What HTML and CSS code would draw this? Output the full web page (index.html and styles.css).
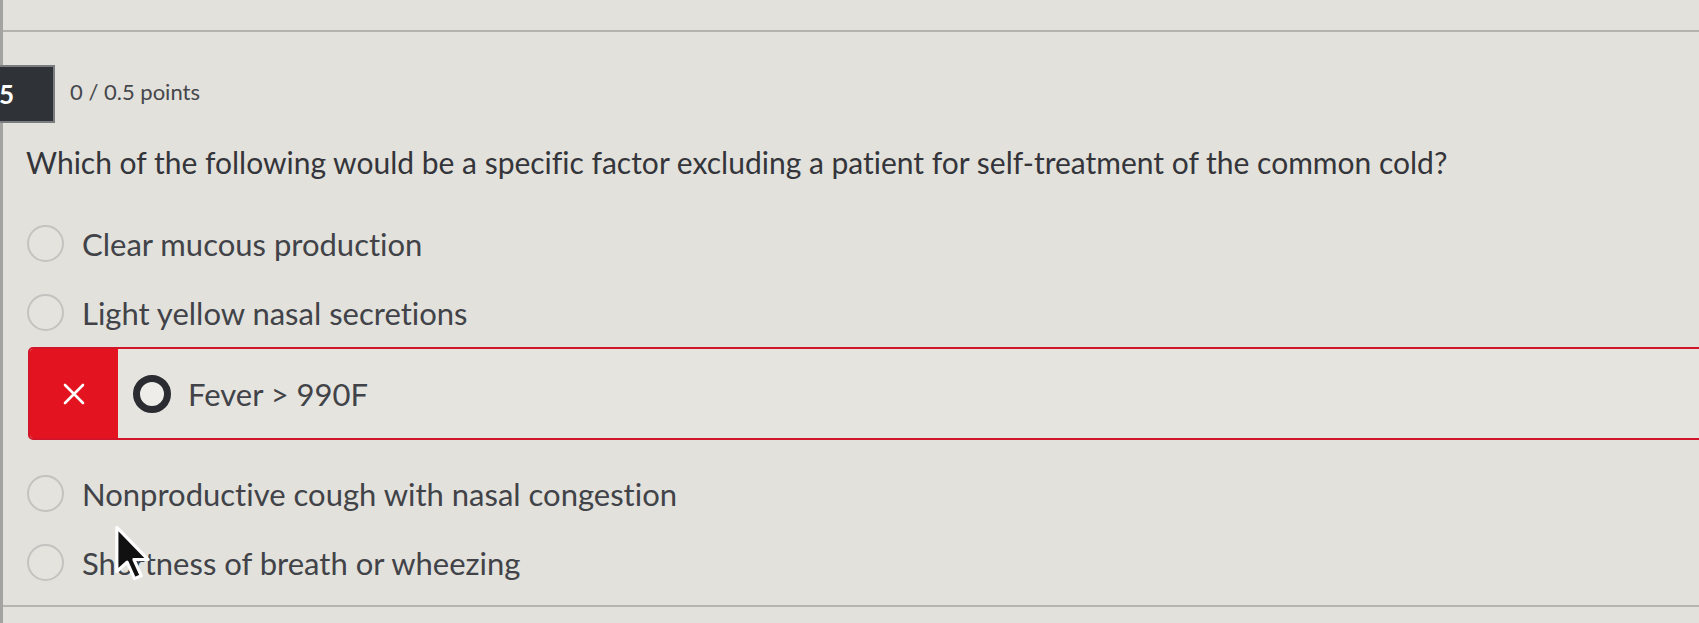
FILE: index.html
```html
<!DOCTYPE html>
<html lang="en">
<head>
<meta charset="utf-8">
<title>Question 5</title>
<link rel="stylesheet" href="styles.css">
</head>
<body>
<div class="page">
  <div class="top-rule"></div>
  <div class="q-header">
    <div class="q-num"><span>5</span></div>
    <div class="q-points">0 / 0.5 points</div>
  </div>
  <p class="q-text">Which of the following would be a specific factor excluding a patient for self-treatment of the common cold?</p>
  <div class="options">
    <div class="opt"><span class="radio"></span><span class="opt-label">Clear mucous production</span></div>
    <div class="opt"><span class="radio"></span><span class="opt-label">Light yellow nasal secretions</span></div>
    <div class="opt-wrong">
      <div class="wrong-flag">
        <svg width="22" height="22" viewBox="0 0 22 22"><path d="M2 2 L20 20 M20 2 L2 20" stroke="#fff" stroke-width="2.6" stroke-linecap="round"/></svg>
      </div>
      <div class="wrong-body"><span class="radio radio-on"></span><span class="opt-label">Fever &gt; 990F</span></div>
    </div>
    <div class="opt opt-after"><span class="radio"></span><span class="opt-label">Nonproductive cough with nasal congestion</span></div>
    <div class="opt"><span class="radio"></span><span class="opt-label">Shortness of breath or wheezing</span></div>
  </div>
  <div class="bottom-rule"></div>
  <svg class="cursor" width="37" height="58" viewBox="0 0 13 20"><path d="M1 1 L1 16.5 L4.6 13.2 L7.2 19 L9.6 18 L7 12.3 L12 12.3 Z" fill="#111" stroke="#fff" stroke-width="1.1" stroke-linejoin="round"/></svg>
</div>
</body>
</html>
```
FILE: styles.css
```css
html, body {
  margin: 0;
  padding: 0;
}
body {
  background: #e2e1dc;
  font-family: Lato, "Open Sans", sans-serif;
  font-variant-ligatures: no-common-ligatures;
  color: #3b3c41;
  overflow: hidden;
  width: 1699px;
  height: 623px;
}
.page {
  position: relative;
  height: 623px;
  padding-top: 30px;
  border-left: 3px solid #a3a3a1;
  box-sizing: border-box;
}
.top-rule {
  height: 0;
  border-top: 2px solid #b3b3ae;
}
.q-header {
  display: flex;
  align-items: center;
  margin-top: 33px;
  margin-left: -3px;
}
.q-num {
  width: 55px;
  height: 58px;
  box-sizing: border-box;
  background: #2f3337;
  border: 2px solid #7a7d80;
  border-left: none;
  color: #fff;
  font-weight: 700;
  font-size: 26px;
  display: flex;
  align-items: center;
  overflow: hidden;
}
.q-num span {
  margin-left: -1px;
}
.q-points {
  margin-left: 15px;
  padding-bottom: 6px;
  font-size: 22px;
  color: #45474b;
}
.q-text {
  margin: 19px 0 0 23px;
  font-size: 30px;
  line-height: 40px;
  color: #34353a;
}
.options {
  margin-top: 27px;
  margin-left: 24px;
}
.opt {
  display: flex;
  align-items: center;
  height: 69px;
}
.radio {
  width: 37px;
  height: 37px;
  box-sizing: border-box;
  border: 2px solid #c3c3c0;
  border-radius: 50%;
  background: #e4e3de;
  flex: none;
}
.opt-label {
  margin-left: 18px;
  font-size: 31px;
  color: #414348;
}
.opt-wrong {
  display: flex;
  height: 93px;
  margin-left: 1px;
  margin-right: -40px;
  box-sizing: border-box;
  border: 2px solid #d3152a;
  border-radius: 5px 0 0 5px;
  overflow: hidden;
}
.wrong-flag {
  width: 88px;
  flex: none;
  background: #e3131f;
  display: flex;
  align-items: center;
  justify-content: center;
}
.wrong-body {
  flex: 1;
  display: flex;
  align-items: center;
  padding-left: 15px;
  background: #e5e4df;
}
.radio-on {
  width: 38px;
  height: 38px;
  border: 7px solid #2a2c31;
  background: #eeede9;
}
.wrong-body .opt-label {
  margin-left: 17px;
  font-size: 31px;
}
.opt-after {
  margin-top: 19px;
}
.bottom-rule {
  margin-top: 8px;
  border-top: 2px solid #b5b5b0;
}
.cursor {
  position: absolute;
  left: 111px;
  top: 524px;
}
```
